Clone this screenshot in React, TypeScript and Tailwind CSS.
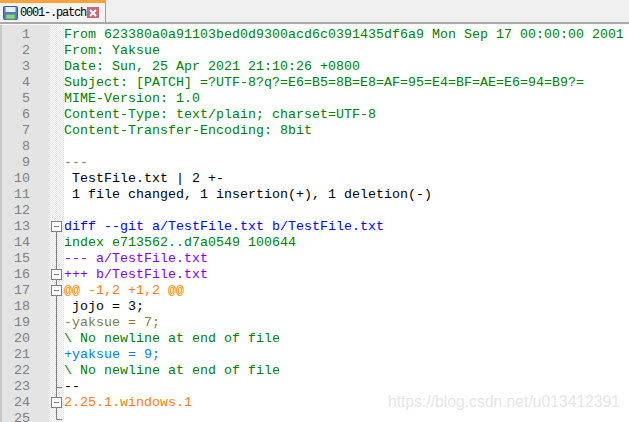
import React from "react";

type Line = { text: string; color: string };

type Fold = "none" | "start" | "box" | "line" | "tick" | "end";

// one entry per editor line, colours as in the diff lexer
const lines: Line[] = [
  { text: "From 623380a0a91103bed0d9300acd6c0391435df6a9 Mon Sep 17 00:00:00 2001", color: "text-[#008000]" },
  { text: "From: Yaksue", color: "text-[#008000]" },
  { text: "Date: Sun, 25 Apr 2021 21:10:26 +0800", color: "text-[#008000]" },
  { text: "Subject: [PATCH] =?UTF-8?q?=E6=B5=8B=E8=AF=95=E4=BF=AE=E6=94=B9?=", color: "text-[#008000]" },
  { text: "MIME-Version: 1.0", color: "text-[#008000]" },
  { text: "Content-Type: text/plain; charset=UTF-8", color: "text-[#008000]" },
  { text: "Content-Transfer-Encoding: 8bit", color: "text-[#008000]" },
  { text: "", color: "text-black" },
  { text: "---", color: "text-[#808040]" },
  { text: " TestFile.txt | 2 +-", color: "text-black" },
  { text: " 1 file changed, 1 insertion(+), 1 deletion(-)", color: "text-black" },
  { text: "", color: "text-black" },
  { text: "diff --git a/TestFile.txt b/TestFile.txt", color: "text-[#0000ff]" },
  { text: "index e713562..d7a0549 100644", color: "text-[#008000]" },
  { text: "--- a/TestFile.txt", color: "text-[#8000ff]" },
  { text: "+++ b/TestFile.txt", color: "text-[#8000ff]" },
  { text: "@@ -1,2 +1,2 @@", color: "text-[#ff8000]" },
  { text: " jojo = 3;", color: "text-black" },
  { text: "-yaksue = 7;", color: "text-[#808040]" },
  { text: "\\ No newline at end of file", color: "text-[#008000]" },
  { text: "+yaksue = 9;", color: "text-[#0080ff]" },
  { text: "\\ No newline at end of file", color: "text-[#008000]" },
  { text: "--", color: "text-black" },
  { text: "2.25.1.windows.1", color: "text-[#ff8000]" },
  { text: "", color: "text-black" },
];

const folds: Fold[] = [
  "none", "none", "none", "none", "none", "none", "none", "none", "none", "none", "none", "none",
  "start", "line", "line", "box", "box", "line", "line", "line", "line", "line", "tick", "box", "end",
];

const FoldMark = ({ kind }: { kind: Fold }) => {
  if (kind === "none") return <div className="h-4" />;
  return (
    <svg width="15" height="16" viewBox="0 0 15 16" className="block">
      {kind === "start" && <line x1="7.5" y1="13" x2="7.5" y2="16" stroke="#808080" />}
      {kind === "box" && (
        <>
          <line x1="7.5" y1="0" x2="7.5" y2="3" stroke="#808080" />
          <line x1="7.5" y1="13" x2="7.5" y2="16" stroke="#808080" />
        </>
      )}
      {(kind === "line" || kind === "tick") && <line x1="7.5" y1="0" x2="7.5" y2="16" stroke="#808080" />}
      {kind === "tick" && <line x1="7.5" y1="8.5" x2="13" y2="8.5" stroke="#808080" />}
      {kind === "end" && (
        <>
          <line x1="7.5" y1="0" x2="7.5" y2="8.5" stroke="#808080" />
          <line x1="7.5" y1="8.5" x2="13" y2="8.5" stroke="#808080" />
        </>
      )}
      {(kind === "start" || kind === "box") && (
        <>
          <rect x="2.5" y="2.5" width="10" height="10" fill="#ffffff" stroke="#808080" />
          <line x1="5" y1="7.5" x2="10" y2="7.5" stroke="#808080" />
        </>
      )}
    </svg>
  );
};

const FloppyIcon = () => (
  <svg width="15" height="14" viewBox="0 0 15 14" className="block">
    <rect x="0.5" y="0.5" width="14" height="13" rx="1" fill="#4a7fc4" stroke="#2f5f9f" />
    <rect x="2.5" y="1" width="10" height="5" fill="#e8eef6" />
    <rect x="2.5" y="8" width="10" height="5.5" fill="#5fae5a" />
    <rect x="3.5" y="9" width="8" height="3.5" fill="#8fd07f" />
  </svg>
);

export default function App() {
  return (
    <div className="relative w-[629px] h-[422px] overflow-hidden bg-white flex flex-col font-['Liberation_Mono',monospace]">
      {/* tab strip */}
      <div className="h-[22px] bg-[#f0f0f0] flex shrink-0">
        <div className="w-[106px] h-[22px] border-t-[3px] border-[#f7a23b] border-r border-r-[#a0a0a0] bg-[#f4f4f4] flex items-center pl-[3px]">
          <FloppyIcon />
          <span className="ml-[2px] text-[12px] tracking-[-1.2px] text-black leading-none">0001-.patch</span>
          <div className="ml-[1px] w-[12px] h-[11px] bg-[#c46a7c] flex items-center justify-center">
            <svg width="8" height="8" viewBox="0 0 8 8">
              <path d="M1 1 L7 7 M7 1 L1 7" stroke="#ffffff" strokeWidth="2" />
            </svg>
          </div>
        </div>
      </div>
      <div className="h-[2px] bg-[#a8a8a8] shrink-0" />
      <div className="h-[1px] bg-[#f8f8f8] shrink-0" />

      {/* editor */}
      <div className="flex-1 flex min-h-0 text-[13.33px] leading-4">
        <div className="w-[49px] shrink-0 bg-[#e4e4e4] border-l-2 border-[#c8c8c8] pt-[2px] text-[#808080] text-right pr-[19px]">
          {lines.map((_, i) => (
            <div key={i} className="h-4">{i + 1}</div>
          ))}
        </div>
        <div className="w-[15px] shrink-0 pt-[2px] bg-[image:repeating-conic-gradient(#e4e4e4_0%_25%,#ffffff_0%_50%)] bg-[length:2px_2px]">
          {folds.map((f, i) => (
            <FoldMark key={i} kind={f} />
          ))}
        </div>
        <div className="flex-1 min-w-0 pt-[2px] whitespace-pre overflow-hidden">
          {lines.map((l, i) => (
            <div key={i} className={`h-4 ${l.color}`}>{l.text}</div>
          ))}
        </div>
      </div>

      {/* csdn watermark */}
      <div className="absolute left-[388px] top-[393px] text-[15.7px] leading-[18px] text-[#e6e6e6] font-['Liberation_Sans',Arial,sans-serif] whitespace-nowrap">
        https://blog.csdn.net/u013412391
      </div>
    </div>
  );
}
